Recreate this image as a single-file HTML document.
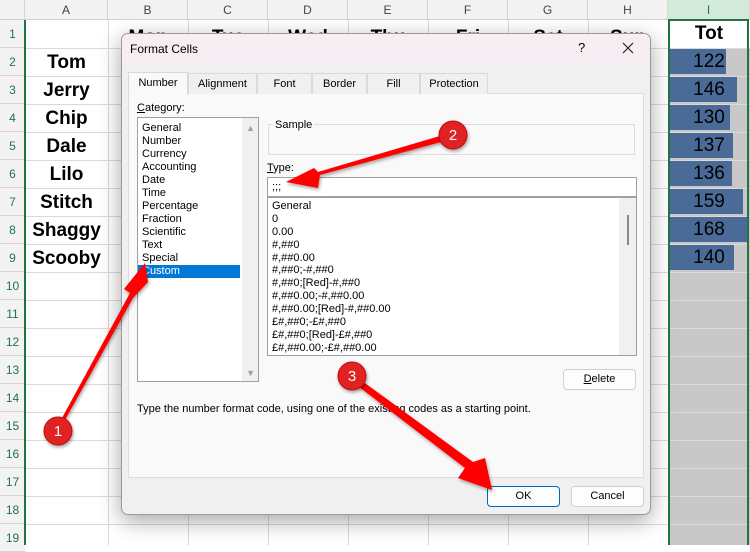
<!DOCTYPE html>
<html><head><style>
*{margin:0;padding:0;box-sizing:border-box}
body{width:750px;height:545px;overflow:hidden;background:#fff;font-family:"Liberation Sans",sans-serif;position:relative}
.abs{position:absolute}
.ch{position:absolute;top:0;height:20px;background:#f3f3f3;border-right:1px solid #d6d6d6;border-bottom:1px solid #d0d0d0;font-size:12px;color:#444;text-align:center;line-height:20px}
.rh{position:absolute;left:0;width:25px;height:28px;background:#f3f3f3;border-bottom:1px solid #d6d6d6;font-size:12px;color:#217346;text-align:center;line-height:28px}
.hl{position:absolute;left:25px;width:725px;height:1px;background:#dadada}
.vl{position:absolute;top:20px;width:1px;height:525px;background:#dadada}
.name{position:absolute;left:25px;width:83px;height:28px;text-align:center;font-weight:bold;font-size:19px;line-height:30px;color:#000}
.bar{position:absolute;left:670px;height:25px;background:#4a6a98}
.num{position:absolute;left:670px;width:78px;height:28px;text-align:center;font-size:19px;line-height:28px;color:#000}
.dlg{position:absolute;left:121px;top:33px;width:530px;height:482px;background:#f0f0f0;border:1px solid #9a9a9a;border-radius:7px;box-shadow:0 6px 22px rgba(0,0,0,.35);overflow:hidden;font-size:11px;color:#000}
.tab{position:absolute;top:39px;height:21px;border:1px solid #d9d9d9;border-bottom:none;background:#f0f0f0;line-height:20px;text-align:center;font-size:11px}
.li{height:13px;line-height:13px;padding-left:4px}
.ti{height:12.9px;line-height:13px;padding-left:4px}
</style></head><body>
<div class="ch" style="left:0;width:25px"></div>
<div class="ch" style="left:25px;width:83px">A</div>
<div class="ch" style="left:108px;width:80px">B</div>
<div class="ch" style="left:188px;width:80px">C</div>
<div class="ch" style="left:268px;width:80px">D</div>
<div class="ch" style="left:348px;width:80px">E</div>
<div class="ch" style="left:428px;width:80px">F</div>
<div class="ch" style="left:508px;width:80px">G</div>
<div class="ch" style="left:588px;width:80px">H</div>
<div class="ch" style="left:668px;width:82px;background:#d3eadb;color:#217346">I</div>
<div class="abs" style="left:668px;top:20px;width:82px;height:525px;background:#c8c8c8"></div>
<div class="abs" style="left:668px;top:20px;width:82px;height:28px;background:#fff"></div>
<div class="vl" style="left:108px"></div><div class="vl" style="left:188px"></div><div class="vl" style="left:268px"></div><div class="vl" style="left:348px"></div><div class="vl" style="left:428px"></div><div class="vl" style="left:508px"></div><div class="vl" style="left:588px"></div>
<div class="hl" style="top:48px"></div><div class="hl" style="top:76px"></div><div class="hl" style="top:104px"></div><div class="hl" style="top:132px"></div><div class="hl" style="top:160px"></div><div class="hl" style="top:188px"></div><div class="hl" style="top:216px"></div><div class="hl" style="top:244px"></div><div class="hl" style="top:272px"></div><div class="hl" style="top:300px"></div><div class="hl" style="top:328px"></div><div class="hl" style="top:356px"></div><div class="hl" style="top:384px"></div><div class="hl" style="top:412px"></div><div class="hl" style="top:440px"></div><div class="hl" style="top:468px"></div><div class="hl" style="top:496px"></div><div class="hl" style="top:524px"></div>
<div class="rh" style="top:20px">1</div><div class="rh" style="top:48px">2</div><div class="rh" style="top:76px">3</div><div class="rh" style="top:104px">4</div><div class="rh" style="top:132px">5</div><div class="rh" style="top:160px">6</div><div class="rh" style="top:188px">7</div><div class="rh" style="top:216px">8</div><div class="rh" style="top:244px">9</div><div class="rh" style="top:272px">10</div><div class="rh" style="top:300px">11</div><div class="rh" style="top:328px">12</div><div class="rh" style="top:356px">13</div><div class="rh" style="top:384px">14</div><div class="rh" style="top:412px">15</div><div class="rh" style="top:440px">16</div><div class="rh" style="top:468px">17</div><div class="rh" style="top:496px">18</div><div class="rh" style="top:524px">19</div>
<div class="abs" style="left:24px;top:20px;width:2px;height:525px;background:#217346"></div>
<div class="name" style="top:48px">Tom</div><div class="name" style="top:76px">Jerry</div><div class="name" style="top:104px">Chip</div><div class="name" style="top:132px">Dale</div><div class="name" style="top:160px">Lilo</div><div class="name" style="top:188px">Stitch</div><div class="name" style="top:216px">Shaggy</div><div class="name" style="top:244px">Scooby</div>
<div class="abs" style="left:108px;top:20px;width:560px;height:28px;font-weight:bold;font-size:19px;line-height:28px;display:flex;padding-top:4px"><span style="width:80px;text-align:center">Mon</span><span style="width:80px;text-align:center">Tue</span><span style="width:80px;text-align:center">Wed</span><span style="width:80px;text-align:center">Thu</span><span style="width:80px;text-align:center">Fri</span><span style="width:80px;text-align:center">Sat</span><span style="width:80px;text-align:center">Sun</span></div>
<div class="num" style="top:20px;font-weight:bold">Tot</div>
<div class="bar" style="top:49px;width:56px"></div><div class="bar" style="top:77px;width:67px"></div><div class="bar" style="top:105px;width:60px"></div><div class="bar" style="top:133px;width:63px"></div><div class="bar" style="top:161px;width:62px"></div><div class="bar" style="top:189px;width:73px"></div><div class="bar" style="top:217px;width:77px"></div><div class="bar" style="top:245px;width:64px"></div>
<div class="num" style="top:48px">122</div><div class="num" style="top:76px">146</div><div class="num" style="top:104px">130</div><div class="num" style="top:132px">137</div><div class="num" style="top:160px">136</div><div class="num" style="top:188px">159</div><div class="num" style="top:216px">168</div><div class="num" style="top:244px">140</div>
<div class="abs" style="left:668px;top:19px;width:81px;height:526px;border:2px solid #217346;border-bottom:none"></div>

<div class="dlg">
 <div class="abs" style="left:0;top:0;width:530px;height:30px;background:#f7eef3"></div>
 <div class="abs" style="left:8px;top:8px;font-size:12px">Format Cells</div>
 <div class="abs" style="left:456px;top:6px;font-size:13px">?</div>
 <svg class="abs" style="left:500px;top:8px" width="12" height="12"><path d="M1 1L11 11M11 1L1 11" stroke="#222" stroke-width="1.2"/></svg>
 <div class="abs" style="left:6px;top:59px;width:516px;height:385px;background:#f9f9f9;border:1px solid #dcdcdc"></div>
 <div class="tab" style="left:6px;top:38px;width:60px;height:23px;background:#f9f9f9">Number</div>
 <div class="tab" style="left:66px;width:69px">Alignment</div>
 <div class="tab" style="left:135px;width:55px">Font</div>
 <div class="tab" style="left:190px;width:55px">Border</div>
 <div class="tab" style="left:245px;width:53px">Fill</div>
 <div class="tab" style="left:298px;width:68px">Protection</div>
 <div class="abs" style="left:15px;top:68px"><u>C</u>ategory:</div>
 <div class="abs" style="left:15px;top:83px;width:122px;height:265px;background:#fff;border:1px solid #a0a0a0;padding-top:4px">
  <div class="li">General</div><div class="li">Number</div><div class="li">Currency</div><div class="li">Accounting</div><div class="li">Date</div><div class="li">Time</div><div class="li">Percentage</div><div class="li">Fraction</div><div class="li">Scientific</div><div class="li">Text</div><div class="li">Special</div><div class="li" style="background:#0078d7;color:#fff;width:102px">Custom</div>
  <div class="abs" style="right:0;top:0;width:16px;height:263px;background:#f0f0f0"></div>
  <div class="abs" style="right:3px;top:5px;color:#a0a0a0;font-size:9px">▲</div>
  <div class="abs" style="right:3px;bottom:3px;color:#a0a0a0;font-size:9px">▼</div>
 </div>
 <div class="abs" style="left:146px;top:90px;width:367px;height:31px;border:1px solid #dcdcdc"></div>
 <div class="abs" style="left:151px;top:85px;background:#f9f9f9;padding:0 2px">Sample</div>
 <div class="abs" style="left:145px;top:128px"><u>T</u>ype:</div>
 <div class="abs" style="left:145px;top:143px;width:370px;height:20px;background:#fff;border:1px solid #a0a0a0;padding:3px 4px">;;;</div>
 <div class="abs" style="left:145px;top:163px;width:370px;height:159px;background:#fff;border:1px solid #a0a0a0;padding-top:2px">
  <div class="ti">General</div><div class="ti">0</div><div class="ti">0.00</div><div class="ti">#,##0</div><div class="ti">#,##0.00</div><div class="ti">#,##0;-#,##0</div><div class="ti">#,##0;[Red]-#,##0</div><div class="ti">#,##0.00;-#,##0.00</div><div class="ti">#,##0.00;[Red]-#,##0.00</div><div class="ti">£#,##0;-£#,##0</div><div class="ti">£#,##0;[Red]-£#,##0</div><div class="ti">£#,##0.00;-£#,##0.00</div>
  <div class="abs" style="right:0;top:0;width:17px;height:157px;background:#f0f0f0"></div>
  <div class="abs" style="right:7px;top:17px;width:2px;height:30px;background:#8a8a8a"></div>
 </div>
 <div class="abs" style="left:441px;top:335px;width:73px;height:21px;background:#fdfdfd;border:1px solid #d0d0d0;border-radius:4px;text-align:center;line-height:19px"><u>D</u>elete</div>
 <div class="abs" style="left:15px;top:369px">Type the number format code, using one of the existing codes as a starting point.</div>
 <div class="abs" style="left:365px;top:452px;width:73px;height:21px;background:#fdfdfd;border:1px solid #0067c0;border-radius:4px;text-align:center;line-height:19px">OK</div>
 <div class="abs" style="left:449px;top:452px;width:73px;height:21px;background:#fdfdfd;border:1px solid #d0d0d0;border-radius:4px;text-align:center;line-height:19px">Cancel</div>
</div>

<svg class="abs" style="left:0;top:0" width="750" height="545">
 <defs><filter id="s"><feDropShadow dx="1" dy="2" stdDeviation="1.5" flood-opacity=".35"/></filter></defs>
 <g fill="#f00" filter="url(#s)">
  <polygon points="62,418 65,420 133,298 148,282 145,263 124,289 130,293"/>
  <polygon points="450,133 452,139 320,175 318,188 286,182 314,168 318,172"/>
  <polygon points="358,378 354,383 465,468 458,478 492,490 485,458 473,462"/>
 </g>
 <g font-family="Liberation Sans" font-size="15" fill="#fff" text-anchor="middle" filter="url(#s)">
  <circle cx="58" cy="431" r="14" fill="#e02020" stroke="#c01010"/><text x="58" y="436">1</text>
  <circle cx="453" cy="135" r="14" fill="#e02020" stroke="#c01010"/><text x="453" y="140">2</text>
  <circle cx="352" cy="376" r="14" fill="#e02020" stroke="#c01010"/><text x="352" y="381">3</text>
 </g>
</svg>
</body></html>
